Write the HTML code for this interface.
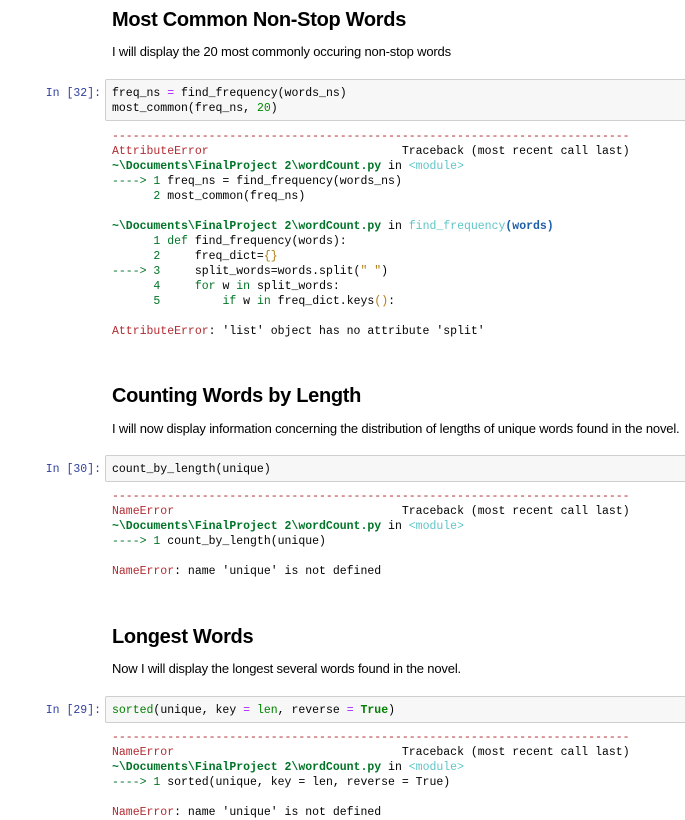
<!DOCTYPE html>
<html><head><meta charset="utf-8"><style>
body{margin:0;width:685px;height:814px;overflow:hidden;background:#fff;position:relative;font-family:"Liberation Sans",Arial,sans-serif;color:#000}
.a{position:absolute;white-space:pre}
h2{position:absolute;margin:0;font-size:20px;font-weight:bold;left:112px;letter-spacing:-0.3px}
.p{position:absolute;left:112px;font-size:13px;letter-spacing:-0.17px;color:#000}
.m{font-family:"Liberation Mono",monospace;font-size:11.5px;line-height:15px}
.prompt{position:absolute;left:0;width:101px;text-align:right;color:#303f9f;font-family:"Liberation Mono",monospace;font-size:11.5px}
.box{position:absolute;left:105px;width:590px;background:#f7f7f7;border:1px solid #cfcfcf;border-radius:2px;box-sizing:border-box}
.r{color:#b22b31}.g{color:#007427}.gb{color:#007427;font-weight:bold}.c{color:#60c6c8}.b{color:#1d5ea8;font-weight:bold}.y{color:#b27d12}.o{color:#aa22ff}.n{color:#008000}.num{color:#080}
.kw{color:#008000;font-weight:bold}
</style></head><body>
<h2 style="top:9px">Most Common Non-Stop Words</h2>
<div class="p" style="top:44px">I will display the 20 most commonly occuring non-stop words</div>
<div class="prompt" style="top:87px">In [32]:</div>
<div class="box" style="top:79px;height:42px"></div>
<div class="a m" style="left:112px;top:86px">freq_ns <span class="o">=</span> find_frequency(words_ns)
most_common(freq_ns, <span class="num">20</span>)</div>
<div class="a m" style="left:112px;top:129px"><span class="r">---------------------------------------------------------------------------</span>
<span class="r">AttributeError</span>                            Traceback (most recent call last)
<span class="gb">~\Documents\FinalProject 2\wordCount.py</span> in <span class="c">&lt;module&gt;</span>
<span class="g">----&gt; 1</span> freq_ns = find_frequency(words_ns)
<span class="g">      2</span> most_common(freq_ns)

<span class="gb">~\Documents\FinalProject 2\wordCount.py</span> in <span class="c">find_frequency</span><span class="b">(words)</span>
<span class="g">      1</span> <span class="g">def</span> find_frequency(words):
<span class="g">      2</span>     freq_dict=<span class="y">{}</span>
<span class="g">----&gt; 3</span>     split_words=words.split(<span class="y">" "</span>)
<span class="g">      4</span>     <span class="g">for</span> w <span class="g">in</span> split_words:
<span class="g">      5</span>         <span class="g">if</span> w <span class="g">in</span> freq_dict.keys<span class="y">()</span>:

<span class="r">AttributeError</span>: 'list' object has no attribute 'split'</div>

<h2 style="top:385px">Counting Words by Length</h2>
<div class="p" style="top:421px">I will now display information concerning the distribution of lengths of unique words found in the novel.</div>
<div class="prompt" style="top:463px">In [30]:</div>
<div class="box" style="top:455px;height:27px"></div>
<div class="a m" style="left:112px;top:462px">count_by_length(unique)</div>
<div class="a m" style="left:112px;top:489px"><span class="r">---------------------------------------------------------------------------</span>
<span class="r">NameError</span>                                 Traceback (most recent call last)
<span class="gb">~\Documents\FinalProject 2\wordCount.py</span> in <span class="c">&lt;module&gt;</span>
<span class="g">----&gt; 1</span> count_by_length(unique)

<span class="r">NameError</span>: name 'unique' is not defined</div>

<h2 style="top:626px">Longest Words</h2>
<div class="p" style="top:661px">Now I will display the longest several words found in the novel.</div>
<div class="prompt" style="top:704px">In [29]:</div>
<div class="box" style="top:696px;height:27px"></div>
<div class="a m" style="left:112px;top:703px"><span class="n">sorted</span>(unique, key <span class="o">=</span> <span class="n">len</span>, reverse <span class="o">=</span> <span class="kw">True</span>)</div>
<div class="a m" style="left:112px;top:730px"><span class="r">---------------------------------------------------------------------------</span>
<span class="r">NameError</span>                                 Traceback (most recent call last)
<span class="gb">~\Documents\FinalProject 2\wordCount.py</span> in <span class="c">&lt;module&gt;</span>
<span class="g">----&gt; 1</span> sorted(unique, key = len, reverse = True)

<span class="r">NameError</span>: name 'unique' is not defined</div>
</body></html>
